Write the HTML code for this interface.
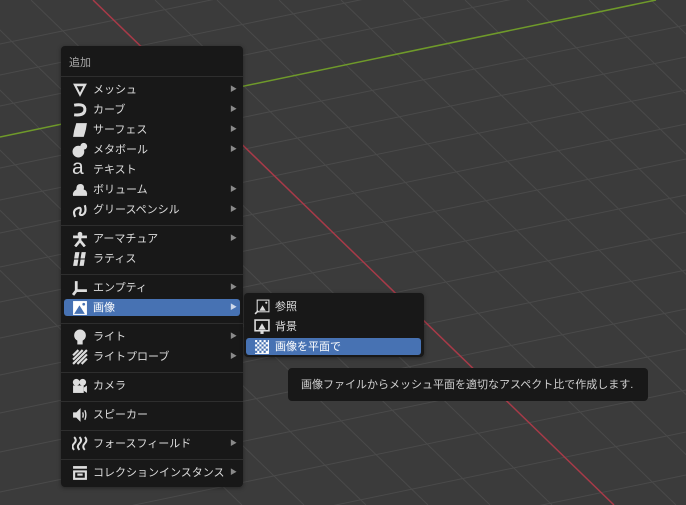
<!DOCTYPE html>
<html><head><meta charset="utf-8"><style>
*{margin:0;padding:0;box-sizing:border-box}
body{width:686px;height:505px;overflow:hidden;background:#3b3b3b;position:relative;font-family:"Liberation Sans","Noto Sans CJK JP",sans-serif;font-size:11px;color:#dddddd}
.bg{position:absolute;left:0;top:0}
.menu{position:absolute;left:61px;top:46px;width:182px;height:441px;background:#181818;border-radius:4px;box-shadow:0 1px 4px rgba(0,0,0,.4)}
.sub{position:absolute;left:244px;top:293px;width:180px;height:64px;background:#181818;border-radius:4px;box-shadow:0 1px 4px rgba(0,0,0,.4)}
.tip{position:absolute;left:288px;top:368px;width:360px;height:33px;background:#181818;border-radius:4px;padding:8px 0 0 13px;color:#d0d0d0;white-space:nowrap}
.it{position:absolute;height:17px;line-height:19px;white-space:nowrap}
.hl{background:#4772b3;border-radius:3px;color:#fff}
.ar{position:absolute;left:166px;font-size:7px;color:#8a8a8a;line-height:18px}
.sep{position:absolute;left:0;width:182px;height:1px;background:#2e2e2e}
.ic{position:absolute;left:8px;top:1px;width:16px;height:16px}
.hd{position:absolute;left:8px;top:8px;color:#a8a8a8}
</style></head><body>
<svg class="bg" width="686" height="505">
<g stroke="#4a4a4a" stroke-width="1">
<line x1="0" y1="44" x2="686" y2="-99"/><line x1="0" y1="75" x2="686" y2="-68"/><line x1="0" y1="106" x2="686" y2="-37"/>
<line x1="0" y1="168" x2="686" y2="25"/><line x1="0" y1="200" x2="686" y2="57"/><line x1="0" y1="233" x2="686" y2="90"/>
<line x1="0" y1="267" x2="686" y2="124"/><line x1="0" y1="302" x2="686" y2="159"/><line x1="0" y1="338" x2="686" y2="195"/>
<line x1="0" y1="375" x2="686" y2="232"/><line x1="0" y1="413" x2="686" y2="270"/><line x1="0" y1="452" x2="686" y2="309"/>
<line x1="0" y1="492" x2="686" y2="349"/><line x1="0" y1="533" x2="686" y2="390"/><line x1="0" y1="575" x2="686" y2="432"/>
<line x1="0" y1="618" x2="686" y2="475"/><line x1="0" y1="662" x2="686" y2="519"/>
<line x1="-279" y1="0" x2="242" y2="505"/><line x1="-217" y1="0" x2="304" y2="505"/><line x1="-155" y1="0" x2="366" y2="505"/><line x1="-93" y1="0" x2="428" y2="505"/><line x1="-31" y1="0" x2="490" y2="505"/><line x1="31" y1="0" x2="552" y2="505"/>
<line x1="155" y1="0" x2="676" y2="505"/><line x1="217" y1="0" x2="738" y2="505"/><line x1="279" y1="0" x2="800" y2="505"/><line x1="341" y1="0" x2="862" y2="505"/><line x1="403" y1="0" x2="924" y2="505"/><line x1="465" y1="0" x2="986" y2="505"/><line x1="527" y1="0" x2="1048" y2="505"/><line x1="589" y1="0" x2="1110" y2="505"/><line x1="651" y1="0" x2="1172" y2="505"/>
</g>
<line x1="0" y1="137" x2="656" y2="0" stroke="#6f9a2a" stroke-width="1.5"/>
<line x1="93" y1="0" x2="614" y2="505" stroke="#a83a48" stroke-width="1.5"/>
</svg>

<div class="menu">
<div class="hd">追加</div>
<div class="sep" style="top:30px"></div>
<div class="it" style="left:3px;top:35px;width:176px"><svg class="ic" viewBox="0 0 15 15"><path d="M1 1.5h13L7.5 14z" fill="#ddd"/><path d="M4.5 4h6L7.5 10z" fill="#181818"/></svg><span style="position:absolute;left:29px">メッシュ</span><span class="ar">▶</span></div>
<div class="it" style="left:3px;top:55px;width:176px"><svg class="ic" viewBox="0 0 15 15"><path d="M2 3Q13 1 12 8Q11 13 2 12" stroke="#ddd" stroke-width="2.8" fill="none"/></svg><span style="position:absolute;left:29px">カーブ</span><span class="ar">▶</span></div>
<div class="it" style="left:3px;top:75px;width:176px"><svg class="ic" viewBox="0 0 15 15"><path d="M4 1h10l-1 6q-1 4-2 7H1l1-6z" fill="#ddd"/></svg><span style="position:absolute;left:29px">サーフェス</span><span class="ar">▶</span></div>
<div class="it" style="left:3px;top:95px;width:176px"><svg class="ic" viewBox="0 0 15 15"><circle cx="6" cy="9" r="5.5" fill="#ddd"/><circle cx="11" cy="4" r="3.2" fill="#ddd"/></svg><span style="position:absolute;left:29px">メタボール</span><span class="ar">▶</span></div>
<div class="it" style="left:3px;top:115px;width:176px"><span style="position:absolute;left:8px;top:-4px;font-size:21px;line-height:22px">a</span><span style="position:absolute;left:29px">テキスト</span></div>
<div class="it" style="left:3px;top:135px;width:176px"><svg class="ic" viewBox="0 0 15 15"><path d="M1 13q-1-4 3-6q0-6 5-5q3 1 2 5q4 1 3 6z" fill="#ddd"/></svg><span style="position:absolute;left:29px">ボリューム</span><span class="ar">▶</span></div>
<div class="it" style="left:3px;top:155px;width:176px"><svg class="ic" viewBox="0 0 15 15"><path d="M3 14Q0 8 5 6Q9 4 8 9Q6 13 10 12Q14 10 12 3" stroke="#ddd" stroke-width="2" fill="none"/></svg><span style="position:absolute;left:29px">グリースペンシル</span><span class="ar">▶</span></div>
<div class="sep" style="top:179px"></div>
<div class="it" style="left:3px;top:184px;width:176px"><svg class="ic" viewBox="0 0 15 15"><circle cx="7.5" cy="3" r="2.2" fill="#ddd"/><path d="M1 5.5h13M7.5 5v4L3 14.5M7.5 9L12 14.5" stroke="#ddd" stroke-width="2.5" fill="none"/></svg><span style="position:absolute;left:29px">アーマチュア</span><span class="ar">▶</span></div>
<div class="it" style="left:3px;top:204px;width:176px"><svg class="ic" viewBox="0 0 15 15"><path d="M3 1h4l-1 6H2zM9 1h4l-1 6H8zM2 8h4l-1 6H1zM8 8h4l-1 6H7z" fill="#ddd"/></svg><span style="position:absolute;left:29px">ラティス</span></div>
<div class="sep" style="top:228px"></div>
<div class="it" style="left:3px;top:233px;width:176px"><svg class="ic" viewBox="0 0 15 15"><path d="M4 1v9h10M4 10l-3 4" stroke="#ddd" stroke-width="2.6" fill="none"/></svg><span style="position:absolute;left:29px">エンプティ</span><span class="ar">▶</span></div>
<div class="it hl" style="left:3px;top:253px;width:176px"><svg class="ic" viewBox="0 0 15 15"><rect x="1" y="1" width="13" height="13" fill="#fff"/><path d="M2 13L7 5l5 8z" fill="#4772b3"/><circle cx="11" cy="4" r="1.3" fill="#4772b3"/></svg><span style="position:absolute;left:29px">画像</span><span class="ar" style="color:#cfd9ea">▶</span></div>
<div class="sep" style="top:277px"></div>
<div class="it" style="left:3px;top:282px;width:176px"><svg class="ic" viewBox="0 0 15 15"><circle cx="7.5" cy="6" r="5.5" fill="#ddd"/><rect x="5" y="10" width="5" height="4.5" fill="#ddd"/></svg><span style="position:absolute;left:29px">ライト</span><span class="ar">▶</span></div>
<div class="it" style="left:3px;top:302px;width:176px"><svg class="ic" viewBox="0 0 15 15"><path d="M1 6l5-5M1 10l9-9M1 14l13-13M5 14l9-9M9 14l5-5" stroke="#ddd" stroke-width="2"/></svg><span style="position:absolute;left:29px">ライトプローブ</span><span class="ar">▶</span></div>
<div class="sep" style="top:326px"></div>
<div class="it" style="left:3px;top:331px;width:176px"><svg class="ic" viewBox="0 0 15 15"><circle cx="4" cy="4" r="3.2" fill="#ddd"/><circle cx="10" cy="4" r="3.2" fill="#ddd"/><rect x="1" y="7" width="10" height="7" fill="#ddd"/><path d="M11 9l3-2v7l-3-2z" fill="#ddd"/></svg><span style="position:absolute;left:29px">カメラ</span></div>
<div class="sep" style="top:355px"></div>
<div class="it" style="left:3px;top:360px;width:176px"><svg class="ic" viewBox="0 0 15 15"><path d="M1 5h3l4-4v13l-4-4H1z" fill="#ddd"/><path d="M10 5q1 2.5 0 5M12 3q2 4.5 0 9" stroke="#ddd" stroke-width="1.3" fill="none"/></svg><span style="position:absolute;left:29px">スピーカー</span></div>
<div class="sep" style="top:384px"></div>
<div class="it" style="left:3px;top:389px;width:176px"><svg class="ic" viewBox="0 0 15 15"><path d="M2 1q3 3 0 6q-3 3 0 6M7 1q3 3 0 6q-3 3 0 6M12 1q3 3 0 6q-3 3 0 6" stroke="#ddd" stroke-width="1.8" fill="none"/></svg><span style="position:absolute;left:29px">フォースフィールド</span><span class="ar">▶</span></div>
<div class="sep" style="top:413px"></div>
<div class="it" style="left:3px;top:418px;width:176px"><svg class="ic" viewBox="0 0 15 15"><rect x="1" y="1" width="13" height="2.5" fill="#ddd"/><path d="M2 6h11v7H2z" stroke="#ddd" stroke-width="2" fill="none"/><rect x="5" y="8" width="5" height="2" fill="#ddd"/></svg><span style="position:absolute;left:29px">コレクションインスタンス</span><span class="ar">▶</span></div>
</div>

<div class="sub">
<div class="it" style="left:2px;top:5px;width:176px"><svg class="ic" viewBox="0 0 15 15"><rect x="3" y="1" width="11" height="11" stroke="#ddd" fill="none"/><path d="M5 11l3-5l3 5z" fill="#ddd"/><circle cx="11.5" cy="3.5" r="1" fill="#ddd"/><path d="M4 11L1 14" stroke="#ddd" stroke-width="1.5"/></svg><span style="position:absolute;left:29px">参照</span></div>
<div class="it" style="left:2px;top:25px;width:176px"><svg class="ic" viewBox="0 0 15 15"><rect x="1" y="1" width="13" height="10" stroke="#ddd" stroke-width="1.5" fill="none"/><path d="M4 10l3.5-6l3.5 6z" fill="#ddd"/><rect x="6" y="11" width="3" height="3" fill="#ddd"/></svg><span style="position:absolute;left:29px">背景</span></div>
<div class="it hl" style="left:2px;top:45px;width:175px"><svg class="ic" viewBox="0 0 15 15"><rect x="1" y="1" width="13" height="13" fill="#fff"/><g fill="#4772b3"><rect x="3" y="1" width="2" height="2"/><rect x="7" y="1" width="2" height="2"/><rect x="11" y="1" width="2" height="2"/><rect x="1" y="3" width="2" height="2"/><rect x="5" y="3" width="2" height="2"/><rect x="9" y="3" width="2" height="2"/><rect x="3" y="5" width="2" height="2"/><rect x="7" y="5" width="2" height="2"/><rect x="11" y="5" width="2" height="2"/><rect x="1" y="7" width="2" height="2"/><rect x="5" y="7" width="2" height="2"/><rect x="9" y="7" width="2" height="2"/><rect x="3" y="9" width="2" height="2"/><rect x="7" y="9" width="2" height="2"/><rect x="11" y="9" width="2" height="2"/><rect x="1" y="11" width="2" height="2"/><rect x="5" y="11" width="2" height="2"/><rect x="9" y="11" width="2" height="2"/></g></svg><span style="position:absolute;left:29px">画像を平面で</span></div>
</div>

<div class="tip">画像ファイルからメッシュ平面を適切なアスペクト比で作成します.</div>
</body></html>
